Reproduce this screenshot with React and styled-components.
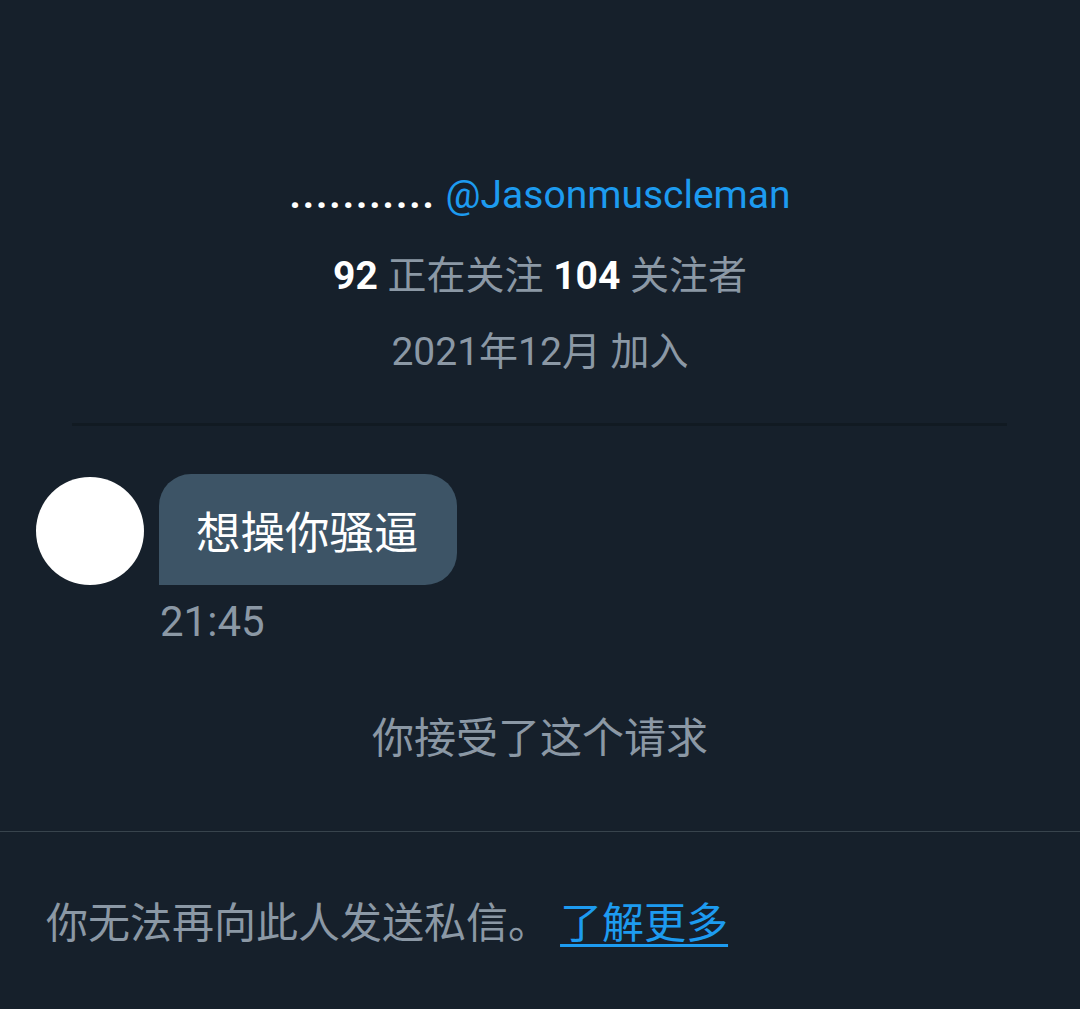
import React from 'react';
import styled, { createGlobalStyle } from 'styled-components';

const GlobalStyle = createGlobalStyle`
  body {
    margin: 0;
    background: #16202b;
    font-family: Roboto, "Noto Sans CJK SC", sans-serif;
  }
`;

const Page = styled.div`
  width: 1080px;
  height: 1009px;
  background: #16202b;
  overflow: hidden;
`;

const Profile = styled.div`
  padding-top: 156px;
  display: flex;
  flex-direction: column;
  align-items: center;
`;

const Line = styled.div`
  height: 78px;
  line-height: ${({ lh }) => lh || 78}px;
  font-size: ${({ size }) => size || 39}px;
  color: #8b98a5;
  white-space: nowrap;
`;

const Dots = styled.span`
  color: #fff;
  font-weight: 700;
  letter-spacing: 2px;
`;

const Handle = styled.span`
  color: #1d9bf0;
`;

const Count = styled.b`
  color: #fff;
  font-weight: 700;
`;

const Separator = styled.div`
  height: 3px;
  margin: 33px 73px 0 72px;
  background: #111a22;
`;

const MessageRow = styled.div`
  display: flex;
  align-items: flex-start;
  margin-top: 48px;
  padding-left: 36px;
`;

const Avatar = styled.div`
  width: 108px;
  height: 108px;
  margin-top: 3px;
  border-radius: 50%;
  background: #fff;
  flex-shrink: 0;
`;

const MessageColumn = styled.div`
  display: flex;
  flex-direction: column;
  margin-left: 15px;
`;

const Bubble = styled.div`
  height: 111px;
  display: flex;
  align-items: center;
  padding: 0 38px 0 37px;
  border-radius: 32px 32px 32px 0;
  background: #3d5466;
  color: #fff;
  font-size: 44.5px;
`;

const Time = styled.div`
  margin-top: 12px;
  margin-left: 1px;
  height: 50px;
  line-height: 50px;
  font-size: 42px;
  color: #8b98a5;
`;

const Notice = styled.div`
  margin-top: 67px;
  height: 50px;
  line-height: 50px;
  text-align: center;
  font-size: 42px;
  color: #8b98a5;
`;

const Divider = styled.div`
  margin-top: 67px;
  height: 1px;
  background: #38444d;
`;

const Footer = styled.div`
  margin-top: 67px;
  padding-left: 46px;
  height: 50px;
  line-height: 50px;
  font-size: 42px;
  color: #8b98a5;
  white-space: nowrap;
`;

const Period = styled.span`
  margin-right: 10px;
`;

const LearnMore = styled.a`
  color: #1d9bf0;
  text-decoration: underline;
  text-underline-offset: 6px;
  text-decoration-thickness: 3px;
`;

export default function App() {
  return (
    <Page>
      <GlobalStyle />
      <Profile>
        <Line size={39}>
          <Dots>...........</Dots> <Handle>@Jasonmuscleman</Handle>
        </Line>
        <Line lh={84}>
          <Count>92</Count> 正在关注 <Count>104</Count> 关注者
        </Line>
        <Line lh={80}>2021年12月 加入</Line>
      </Profile>
      <Separator />
      <MessageRow>
        <Avatar />
        <MessageColumn>
          <Bubble>想操你骚逼</Bubble>
          <Time>21:45</Time>
        </MessageColumn>
      </MessageRow>
      <Notice>你接受了这个请求</Notice>
      <Divider />
      <Footer>
        你无法再向此人发送私信<Period>。</Period><LearnMore>了解更多</LearnMore>
      </Footer>
    </Page>
  );
}
